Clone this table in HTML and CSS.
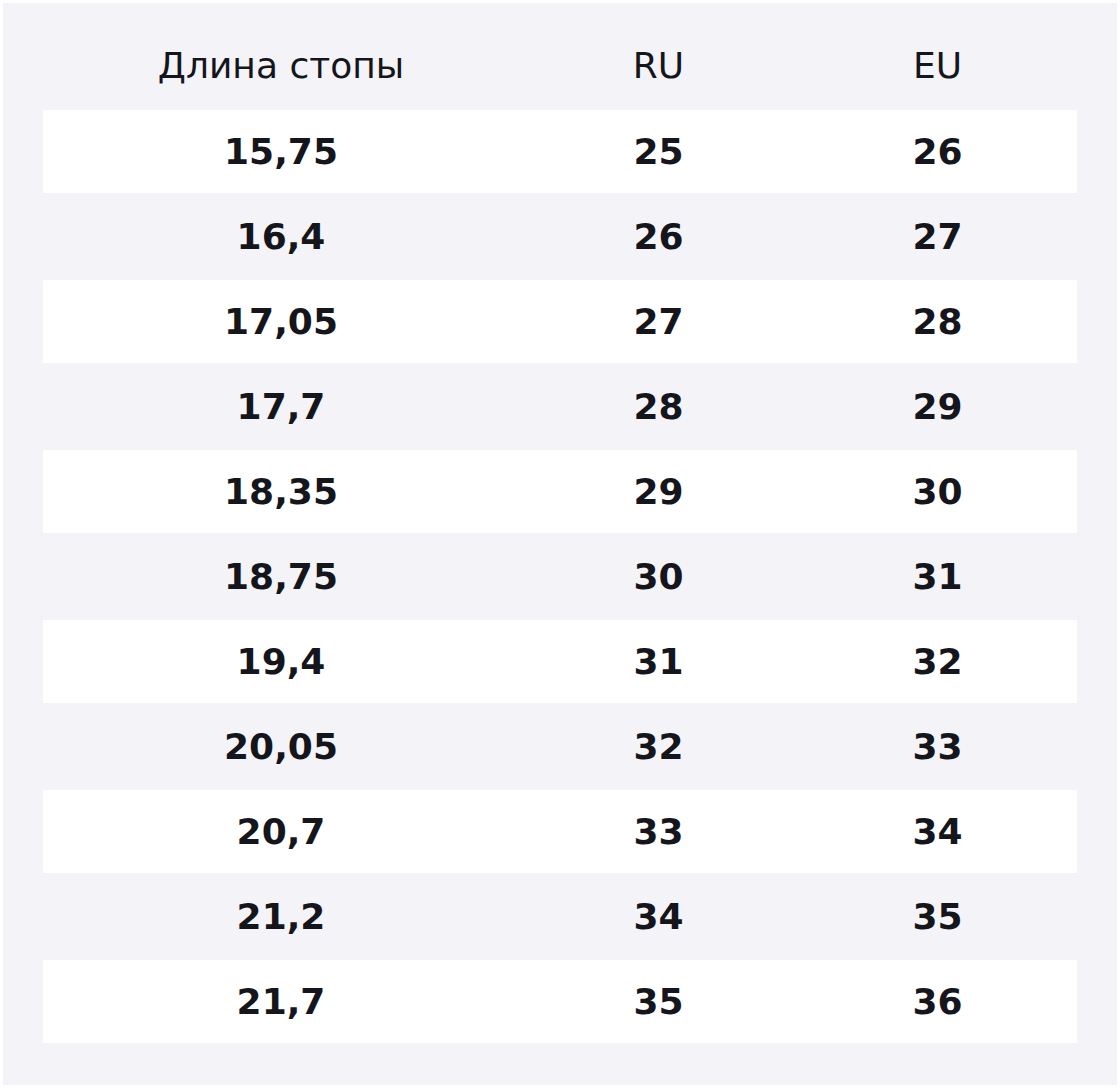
FILE: index.html
```html
<!DOCTYPE html>
<html lang="ru">
<head>
<meta charset="utf-8">
<title>Размеры</title>
<link rel="stylesheet" href="styles.css">
</head>
<body>
<div class="panel">
  <table class="sizes">
    <colgroup>
      <col class="c1"><col class="c2"><col class="c3">
    </colgroup>
    <thead>
      <tr><th>Длина стопы</th><th>RU</th><th>EU</th></tr>
    </thead>
    <tbody>
      <tr class="odd"><td>15,75</td><td>25</td><td>26</td></tr>
      <tr><td>16,4</td><td>26</td><td>27</td></tr>
      <tr class="odd"><td>17,05</td><td>27</td><td>28</td></tr>
      <tr><td>17,7</td><td>28</td><td>29</td></tr>
      <tr class="odd"><td>18,35</td><td>29</td><td>30</td></tr>
      <tr><td>18,75</td><td>30</td><td>31</td></tr>
      <tr class="odd"><td>19,4</td><td>31</td><td>32</td></tr>
      <tr><td>20,05</td><td>32</td><td>33</td></tr>
      <tr class="odd"><td>20,7</td><td>33</td><td>34</td></tr>
      <tr><td>21,2</td><td>34</td><td>35</td></tr>
      <tr class="odd"><td>21,7</td><td>35</td><td>36</td></tr>
    </tbody>
  </table>
</div>
</body>
</html>
```
FILE: styles.css
```css
html, body {
  background: #ffffff;
}
body {
  margin: 3px;
  font-family: "DejaVu Sans", sans-serif;
  color: #15151c;
}
.panel {
  background: #f4f4f8;
  padding: 40px;
}
.sizes {
  width: 100%;
  border-collapse: separate;
  border-spacing: 0 2px;
  table-layout: fixed;
}
.c1 { width: 476px; }
.c2 { width: 279px; }
.c3 { width: 279px; }
.sizes th {
  font-weight: normal;
  font-size: 36px;
  line-height: 42px;
  height: 42px;
  padding: 0 0 21px;
  vertical-align: top;
  text-align: center;
}
.sizes td {
  font-weight: bold;
  font-size: 36px;
  line-height: 42px;
  height: 83px;
  padding: 0;
  box-sizing: border-box;
  vertical-align: middle;
  text-align: center;
}
.sizes tr.odd td {
  background: #ffffff;
}
```
